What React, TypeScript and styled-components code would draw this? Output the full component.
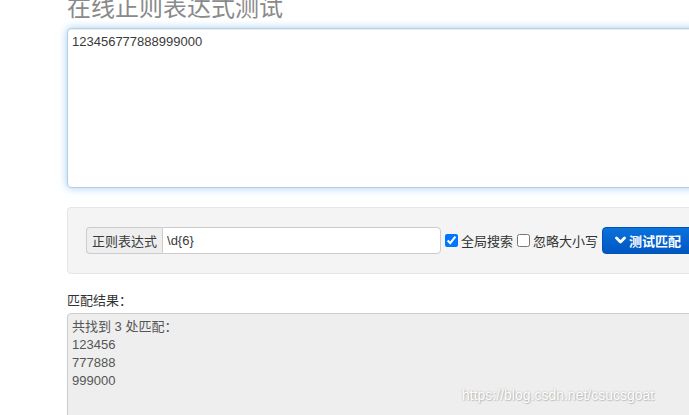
import { FunctionComponent } from "react";
import styled, { createGlobalStyle } from "styled-components";

const GlobalStyle = createGlobalStyle`
    html, body {
        margin: 0;
        padding: 0;
        background: #ffffff;
        overflow: hidden;
    }

    body {
        font-family: "Liberation Sans", "Noto Sans CJK SC", sans-serif;
        font-size: 13px;
        color: #333333;
    }
`;

const Page = styled.div`
    position: relative;
    width: 689px;
    height: 415px;
    overflow: hidden;
`;

const Container = styled.div`
    width: 720px;
    padding-left: 67px;
`;

const Title = styled.h1`
    margin: -5px 0 7px;
    font-size: 24px;
    line-height: 26px;
    font-weight: normal;
    color: #8a8a8a;
`;

const Editor = styled.textarea`
    display: block;
    box-sizing: border-box;
    width: 100%;
    height: 160px;
    margin: 0;
    padding: 4px;
    resize: none;
    border: 1px solid #b5cde6;
    border-radius: 4px;
    box-shadow: inset 0 1px 1px rgba(0, 0, 0, 0.075), 0 0 8px rgba(102, 175, 233, 0.6);
    font-family: "Liberation Sans", "Noto Sans CJK SC", sans-serif;
    font-size: 13px;
    line-height: 18px;
    color: #3a3a3a;
    outline: none;
`;

const Well = styled.div`
    margin-top: 19px;
    box-sizing: border-box;
    padding: 19px 18px;
    background: #f4f4f4;
    border: 1px solid #e6e6e6;
    border-radius: 4px;
`;

const Toolbar = styled.div`
    display: flex;
    align-items: center;
    height: 27px;
`;

const InputGroup = styled.div`
    display: flex;
    height: 27px;
    width: 355px;
`;

const Addon = styled.span`
    display: flex;
    align-items: center;
    padding: 0 5px;
    background: #eeeeee;
    border: 1px solid #cccccc;
    border-right: none;
    border-radius: 4px 0 0 4px;
    white-space: nowrap;
    color: #3a3a3a;
`;

const PatternInput = styled.input`
    flex: 1;
    box-sizing: border-box;
    height: 27px;
    margin: 0;
    padding: 0 4px;
    border: 1px solid #cccccc;
    border-radius: 0 4px 4px 0;
    font-family: "Liberation Sans", "Noto Sans CJK SC", sans-serif;
    font-size: 13px;
    color: #3a3a3a;
    outline: none;
`;

const Option = styled.label`
    display: flex;
    align-items: center;
    gap: 3px;
    margin-left: 4px;
    white-space: nowrap;
    color: #333333;

    input {
        width: 13px;
        height: 13px;
        margin: 0;
    }
`;

const Button = styled.button`
    display: flex;
    align-items: center;
    gap: 3px;
    height: 27px;
    margin-left: 4px;
    padding: 0 12px;
    border: 1px solid #0052b5;
    border-radius: 4px;
    background: linear-gradient(to bottom, #0b72dc 0%, #0056c2 100%);
    color: #ffffff;
    font-family: "Liberation Sans", "Noto Sans CJK SC", sans-serif;
    font-size: 13px;
    font-weight: bold;
    white-space: nowrap;
`;

const ResultLabel = styled.div`
    margin-top: 18px;
    margin-bottom: 3px;
    line-height: 18px;
    color: #333333;
`;

const ResultBox = styled.div`
    box-sizing: border-box;
    height: 130px;
    padding: 4px;
    background: #eeeeee;
    border: 1px solid #cccccc;
    border-radius: 4px;
    line-height: 18px;
    color: #555555;
`;

const Watermark = styled.div`
    position: absolute;
    left: 462px;
    top: 387px;
    font-family: "Liberation Sans", sans-serif;
    font-size: 14px;
    color: #ffffff;
    text-shadow: 0 0 2px rgba(0, 0, 0, 0.25), 1px 1px 1px rgba(0, 0, 0, 0.15);
`;

const ChevronDown: FunctionComponent = () => (
    <svg width="11" height="9" viewBox="0 0 11 9">
        <path d="M1.5 2 L5.5 6 L9.5 2" fill="none" stroke="#ffffff" strokeWidth="2.8" strokeLinecap="round" strokeLinejoin="round" />
    </svg>
);

const matches = ["123456", "777888", "999000"];

const App: FunctionComponent = () => (
    <>
        <GlobalStyle />
        <Page>
            <Container>
                <Title>在线正则表达式测试</Title>
                <Editor defaultValue="123456777888999000" spellCheck={false} />
                <Well>
                    <Toolbar>
                        <InputGroup>
                            <Addon>正则表达式</Addon>
                            <PatternInput defaultValue="\d{6}" spellCheck={false} />
                        </InputGroup>
                        <Option>
                            <input type="checkbox" defaultChecked />
                            全局搜索
                        </Option>
                        <Option>
                            <input type="checkbox" />
                            忽略大小写
                        </Option>
                        <Button>
                            <ChevronDown />
                            测试匹配
                        </Button>
                    </Toolbar>
                </Well>
                <ResultLabel>匹配结果：</ResultLabel>
                <ResultBox>
                    <div>共找到 3 处匹配：</div>
                    {matches.map(m => (<div key={m}>{m}</div>))}
                </ResultBox>
            </Container>
            <Watermark>https://blog.csdn.net/csucsgoat</Watermark>
        </Page>
    </>
);

export default App;
